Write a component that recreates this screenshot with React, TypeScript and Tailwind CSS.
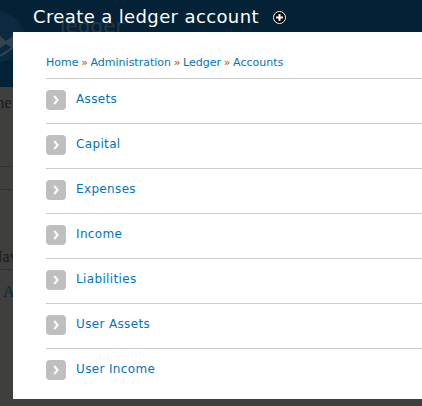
const items = ["Assets", "Capital", "Expenses", "Income", "Liabilities", "User Assets", "User Income"];

function Arrow() {
  return (
    <span className="flex h-5 w-5 shrink-0 items-center justify-center rounded-[4px] bg-[#bfbfbf]">
      <svg width="6" height="10" viewBox="0 0 6 10" fill="none">
        <path d="M1.2 1 L4.6 5 L1.2 9" stroke="#ffffff" strokeWidth="2" />
      </svg>
    </span>
  );
}

function Sep() {
  return <span className="text-[#bb4a0a]">»</span>;
}

export default function App() {
  return (
    <div className="relative h-[406px] w-[422px] overflow-hidden bg-[#3f3f3e] font-['DejaVu_Sans',sans-serif]">
      {/* page behind the overlay */}
      <div className="relative h-[87px] bg-[#042236]">
        <svg className="absolute left-0 top-0" width="30" height="70" viewBox="0 0 30 70">
          <path d="M-6 8 C6 12 26 20 26 40 C26 54 14 62 -6 62 Z" fill="#0b2a3f" />
          <path d="M0 36 L6 41 L13 36 L13 48 L6 44 L0 48 Z" fill="#33444f" />
          <path d="M0 56 C5 53 10 50 13 47" stroke="#33444f" strokeWidth="2" fill="none" />
        </svg>
        <div className="absolute left-[60px] top-[14px] text-[20px] leading-[24px] text-[#24394a]">ledger</div>
        <div className="relative flex h-[32px] items-start pl-[33px] pt-[4px]">
          <h1 className="text-[18px] leading-[26px] tracking-[0.38px] text-white">Create a ledger account</h1>
          <span className="ml-[14px] mt-[7px] flex h-[13px] w-[13px] items-center justify-center rounded-full border border-white bg-black">
            <svg width="9" height="9" viewBox="0 0 9 9">
              <path d="M4.5 1 V8 M1 4.5 H8" stroke="#ffffff" strokeWidth="2" />
            </svg>
          </span>
        </div>
      </div>
      <div className="h-[80px] border-b border-[#333333] pt-[6px] font-['Liberation_Serif',serif] text-[16px] leading-[20px] text-[#1a1a1a]">
        <span className="ml-[-8px]">me</span>
      </div>
      <div className="h-[23px] border-b border-[#333333]" />
      <div className="h-[80px] border-b border-[#333333] pt-[57px] font-['Liberation_Serif',serif] text-[16px] leading-[20px] text-[#1a1a1a]">
        <span className="ml-[-9px]">Nav</span>
      </div>
      <div className="pl-[3px] pt-[13px] font-['Liberation_Serif',serif] text-[16px] leading-[18px] text-[#10283a]">A</div>

      {/* modal */}
      <div className="absolute left-[13px] top-[32px] h-[367px] w-[409px] bg-white pl-[33px]">
        <div className="pt-[24px] text-[11px] leading-[13px] text-[#0074bd] [word-spacing:-0.85px]">
          Home <Sep /> Administration <Sep /> Ledger <Sep /> Accounts
        </div>
        <ul className="mt-[9px]">
          {items.map((item) => (
            <li key={item} className="flex h-[45px] items-center gap-[10px] border-t border-[#cccccc] pb-[2px]">
              <Arrow />
              <a className="mt-[-3px] text-[12px] tracking-[0.35px] text-[#0074bd]">{item}</a>
            </li>
          ))}
        </ul>
      </div>
    </div>
  );
}
